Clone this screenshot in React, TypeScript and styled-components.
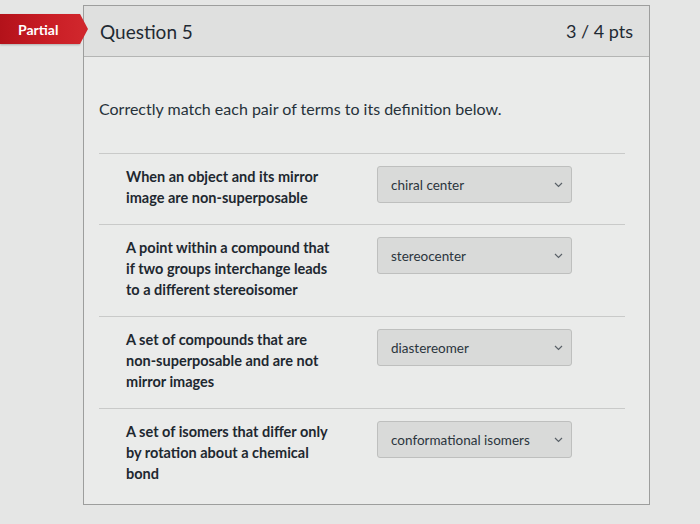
import React from 'react';
import styled, { createGlobalStyle } from 'styled-components';

const GlobalStyle = createGlobalStyle`
    body {
        margin: 0;
        background: #e5e6e5;
        font-family: Lato, "Open Sans", Arial, sans-serif;
        color: #2d3b45;
    }
`;

const Page = styled.div`
    display: flex;
    align-items: flex-start;
    padding-top: 5px;
    height: 519px;
    overflow: hidden;
`;

const Gutter = styled.div`
    position: relative;
    width: 83px;
    flex-shrink: 0;
    align-self: stretch;
`;

const Badge = styled.div`
    position: absolute;
    top: 9px;
    left: 0;
    width: 80px;
    height: 30px;
    display: flex;
    align-items: center;
    padding-left: 18px;
    box-sizing: border-box;
    background: linear-gradient(90deg, #b3121a 0%, #c91d25 60%, #d0262c 100%);
    color: #fff;
    font-size: 14px;
    font-weight: 700;
    box-shadow: 0 1px 2px rgba(0, 0, 0, 0.25);
    z-index: 2;

    &::after {
        content: '';
        position: absolute;
        right: -8px;
        top: 0;
        border-top: 15px solid transparent;
        border-bottom: 15px solid transparent;
        border-left: 8px solid #d0262c;
    }
`;

const Card = styled.div`
    width: 567px;
    height: 500px;
    border: 1px solid #9d9e9d;
    background: #eaebea;
    box-sizing: border-box;
`;

const Header = styled.div`
    height: 50px;
    display: flex;
    align-items: center;
    justify-content: space-between;
    padding: 0 16px 0 16px;
    background: #dfe0df;
    border-bottom: 1px solid #b4b5b4;
`;

const Title = styled.h2`
    margin: 0;
    font-size: 19px;
    font-weight: 400;
    color: #1f2a33;
`;

const Points = styled.div`
    font-size: 18px;
    color: #1f2a33;
`;

const Body = styled.div`
    padding: 40px 24px 0 15px;
`;

const Prompt = styled.p`
    margin: 0 0 32px;
    font-size: 16px;
    line-height: 24px;
    color: #27323a;
`;

const Row = styled.div`
    display: grid;
    grid-template-columns: 208px 195px;
    column-gap: 43px;
    align-items: start;
    padding: 12px 0 16px 27px;
    border-top: 1px solid #c9cac9;
`;

const Term = styled.div`
    font-size: 14.5px;
    font-weight: 700;
    line-height: 21px;
    color: #1e2830;
`;

const Select = styled.div`
    height: 37px;
    display: flex;
    align-items: center;
    justify-content: space-between;
    padding: 0 8px 0 13px;
    box-sizing: border-box;
    background: #d9dad9;
    border: 1px solid #bebfbe;
    border-radius: 3px;
    font-size: 13.5px;
    color: #2b353d;
`;

const Chevron = () => (
    <svg width="9" height="6" viewBox="0 0 9 6" fill="none">
        <path d="M1 1l3.5 3.5L8 1" stroke="#5a6168" strokeWidth="1.2" />
    </svg>
);

const pairs = [
    { term: 'When an object and its mirror image are non-superposable', answer: 'chiral center' },
    { term: 'A point within a compound that if two groups interchange leads to a different stereoisomer', answer: 'stereocenter' },
    { term: 'A set of compounds that are non-superposable and are not mirror images', answer: 'diastereomer' },
    { term: 'A set of isomers that differ only by rotation about a chemical bond', answer: 'conformational isomers' },
];

export default function App() {
    return (
        <>
            <GlobalStyle />
            <Page>
                <Gutter>
                    <Badge>Partial</Badge>
                </Gutter>
                <Card>
                    <Header>
                        <Title>Question 5</Title>
                        <Points>3 / 4 pts</Points>
                    </Header>
                    <Body>
                        <Prompt>Correctly match each pair of terms to its definition below.</Prompt>
                        {pairs.map(p => (
                            <Row key={p.answer}>
                                <Term>{p.term}</Term>
                                <Select>
                                    <span>{p.answer}</span>
                                    <Chevron />
                                </Select>
                            </Row>
                        ))}
                    </Body>
                </Card>
            </Page>
        </>
    );
}
